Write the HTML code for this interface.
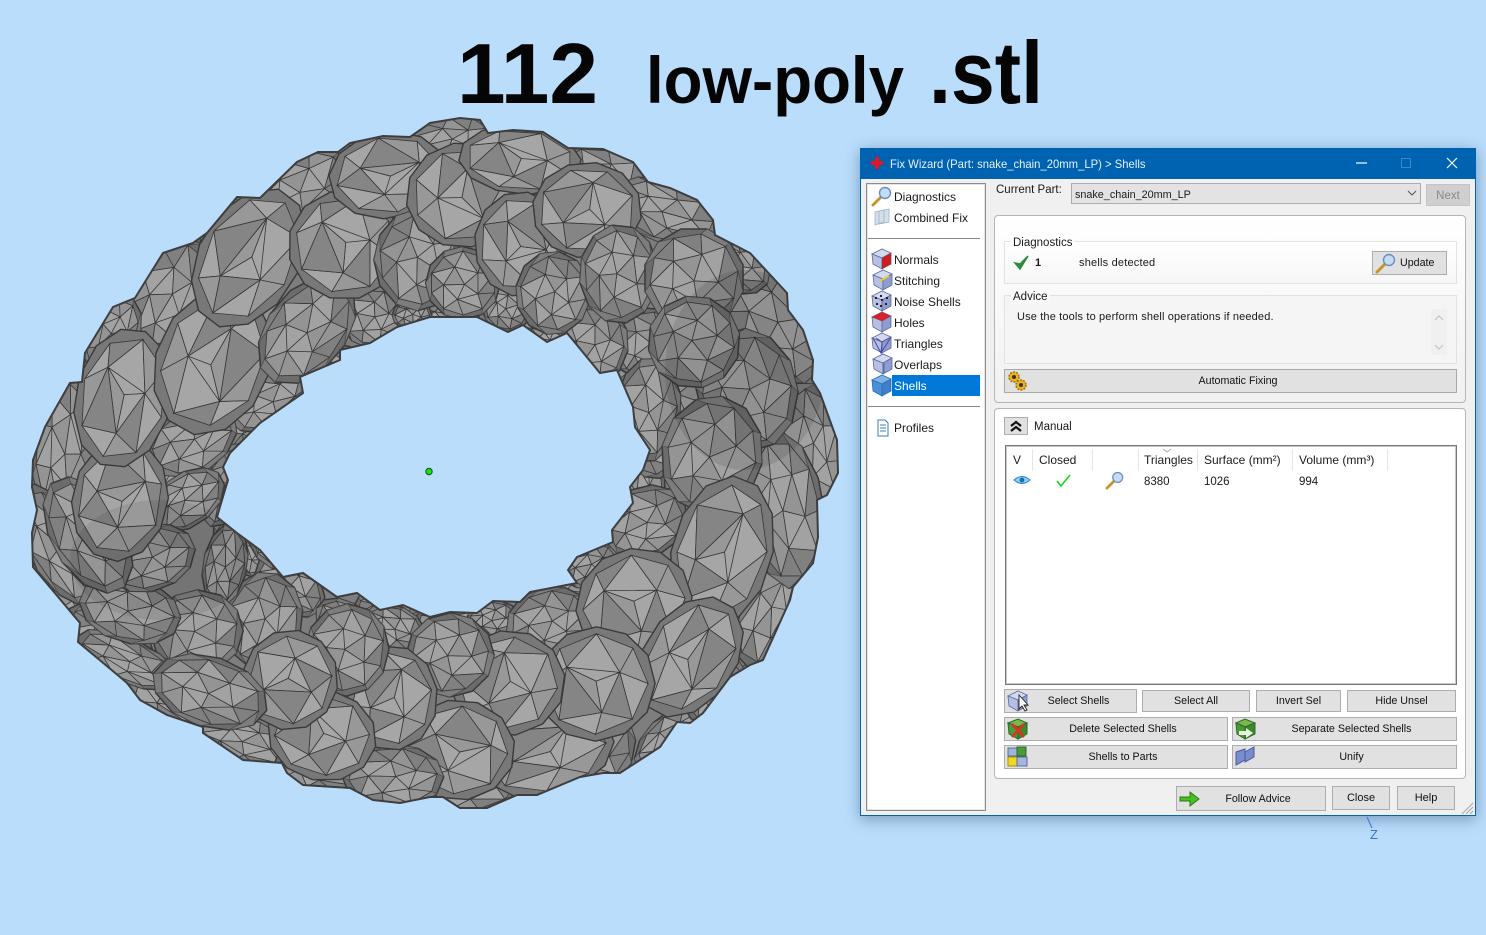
<!DOCTYPE html>
<html><head><meta charset="utf-8"><title>112 low-poly .stl</title>
<style>
html,body{margin:0;padding:0;background:#b9ddfb;width:1486px;height:935px;overflow:hidden}
body{position:relative;font-family:"Liberation Sans",sans-serif;color:#111}
svg{position:absolute;left:0;top:0}
.m path,.m polygon{vector-effect:non-scaling-stroke}
.a{position:absolute;box-sizing:border-box}
.t{position:absolute;white-space:nowrap;font-size:11.5px;line-height:14px;color:#1a1a1a}
.n{font-size:12px}
.b{position:absolute;box-sizing:border-box;background:#e1e1e1;border:1px solid #adadad;font-size:10.7px;color:#111;text-align:center;white-space:nowrap}
</style></head><body>
<svg width="1486" height="935" viewBox="0 0 1486 935">
<defs>
<g id="s" class="m" transform="scale(1.1)">
<polygon points="100,0 87,50 50,87 0,100 -50,87 -87,50 -100,0 -87,-50 -50,-87 0,-100 50,-87 87,-50" fill="#6c6c6c" stroke="#3a3a3a" stroke-width="1.5"/>
<path fill="#7d7d7d" stroke="#4a4a4a" stroke-width=".7" d="M88 0L100 0L87 50L71 52ZM27 84L50 87L0 100L-27 84ZM-71 52L-87 50L-100 0L-88 0ZM-71-52L-50-87L0-100L-27-84ZM27-84L50-87L87-50L71-52Z"/>
<path fill="#a2a2a2" stroke="#383838" stroke-width=".8" d="M4-4L45 15L5 52ZM4-4L-44 22L-28-40ZM4-4L30-40L45 15ZM45 15L71 52L5 52ZM-44 22L-27 84L5 52ZM-44 22L-88 0L-28-40ZM30-40L71-52L45 15Z"/>
<path fill="#949494" stroke="#383838" stroke-width=".8" d="M4-4L5 52L-44 22ZM4-4L-28-40L30-40ZM5 52L71 52L27 84ZM-44 22L-71 52L-88 0ZM-28-40L-27-84L30-40ZM45 15L71-52L88 0ZM45 15L88 0L71 52Z"/>
<path fill="#808080" stroke="#383838" stroke-width=".8" d="M5 52L27 84L-27 84ZM-44 22L-27 84L-71 52ZM-28-40L-88 0L-71-52ZM-28-40L-71-52L-27-84ZM30-40L-27-84L27-84ZM30-40L27-84L71-52Z"/>
</g>
<g id="t" class="m" transform="scale(1.14)">
<polygon points="100,0 87,50 50,87 0,100 -50,87 -87,50 -100,0 -87,-50 -50,-87 0,-100 50,-87 87,-50" fill="#787878" stroke="#3a3a3a" stroke-width="1.4"/>
<path fill="#a6a6a6" stroke="#363636" stroke-width=".8" d="M0-5L40-20L10 50ZM0-5L-50-30L40-20ZM40-20L88 0L62 62ZM10 50L0 88L-62 62ZM-50-30L-88 0L-62-62ZM-50-30L0-88L40-20Z"/>
<path fill="#989898" stroke="#363636" stroke-width=".8" d="M0-5L10 50L-50-30ZM40-20L62-62L88 0ZM10 50L62 62L0 88ZM-50-30L-62 62L-88 0ZM40-20L0-88L62-62Z"/>
<path fill="#858585" stroke="#363636" stroke-width=".8" d="M40-20L62 62L10 50ZM10 50L-62 62L-50-30ZM-50-30L-62-62L0-88Z"/>
</g>
<clipPath id="c"><path clip-rule="evenodd" d="M45 427L70 383L82 382L85 353L113 307L135 298L163 253L193 243L207 233L237 197L260 198L297 162L318 152L338 152L350 143L383 136L410 137L430 123L460 118L480 120L488 133L513 130L543 132L568 148L603 149L633 162L648 182L670 188L697 200L713 220L715 235L750 253L787 293L788 310L803 330L813 360L812 380L820 393L837 440L838 473L827 495L817 500L818 537L813 563L793 587L790 600L763 660L750 665L730 677L703 713L690 723L677 722L660 747L620 773L603 773L580 777L537 795L517 795L487 808L460 808L443 797L430 797L400 803L373 800L350 788L303 785L287 773L282 763L243 760L203 733L203 727L167 715L140 700L127 683L120 677L78 642L80 623L33 567L32 533L37 510L32 487L33 460ZM430 317L477 317L508 332L523 325L547 342L567 333L600 373L617 370L633 407L635 427L650 450L643 470L630 487L633 503L612 530L613 542L577 557L568 570L577 583L530 592L520 602L493 601L477 613L450 612L430 617L403 605L380 610L357 593L337 597L303 573L283 577L260 550L237 533L217 517L222 500L228 480L223 467L230 453L260 423L303 393L300 377L340 360L340 350L370 343L397 327Z"/></clipPath>
</defs>
<path fill="#7e7e7e" clip-path="url(#c)" d="M0 100H860V830H0Z"/>
<g clip-path="url(#c)">
<use href="#s" transform="translate(245 545) rotate(45) scale(.34 .24) rotate(10)"/>
<use href="#s" transform="translate(290 585) rotate(40) scale(.36 .24) rotate(120)"/>
<use href="#s" transform="translate(390 612) rotate(5) scale(.34 .22) rotate(60)"/>
<use href="#s" transform="translate(450 625) rotate(0) scale(.34 .2) rotate(210)"/>
<use href="#s" transform="translate(565 590) rotate(-20) scale(.34 .24) rotate(90)"/>
<use href="#s" transform="translate(610 540) rotate(-35) scale(.34 .24) rotate(20)"/>
<use href="#s" transform="translate(638 470) rotate(80) scale(.46 .24) rotate(300)"/>
<use href="#s" transform="translate(650 440) rotate(75) scale(.36 .26) rotate(150)"/>
<use href="#s" transform="translate(628 385) rotate(70) scale(.4 .26) rotate(40)"/>
<use href="#s" transform="translate(600 352) rotate(50) scale(.36 .24) rotate(200)"/>
<use href="#s" transform="translate(440 320) rotate(0) scale(.36 .16) rotate(20)"/>
<use href="#s" transform="translate(330 372) rotate(-20) scale(.36 .22) rotate(100)"/>
<use href="#s" transform="translate(262 425) rotate(-35) scale(.4 .24) rotate(250)"/>
<use href="#s" transform="translate(226 485) rotate(-70) scale(.4 .2) rotate(30)"/>
<use href="#s" transform="translate(700 620) rotate(35) scale(.6 .4) rotate(70)"/>
<use href="#s" transform="translate(670 740) rotate(-45) scale(.4 .22) rotate(180)"/>
<use href="#s" transform="translate(700 400) rotate(0) scale(.4 .4) rotate(110)"/>
<use href="#s" transform="translate(650 345) rotate(20) scale(.36 .34) rotate(330)"/>
<use href="#s" transform="translate(640 180) rotate(20) scale(.4 .22) rotate(60)"/>
<use href="#s" transform="translate(250 330) rotate(30) scale(.42 .42) rotate(30)"/>
<use href="#s" transform="translate(165 350) rotate(0) scale(.4 .4) rotate(160)"/>
<use href="#s" transform="translate(170 470) rotate(0) scale(.38 .3) rotate(90)"/>
<use href="#s" transform="translate(70 600) rotate(40) scale(.42 .22) rotate(10)"/>
<use href="#s" transform="translate(280 540) rotate(40) scale(.32 .26) rotate(70)"/>
<use href="#s" transform="translate(450 140) rotate(-8) scale(.42 .24) rotate(20)"/>
<use href="#s" transform="translate(535 160) rotate(8) scale(.52 .32) rotate(70)"/>
<use href="#s" transform="translate(605 178) rotate(18) scale(.48 .28) rotate(120)"/>
<use href="#s" transform="translate(665 212) rotate(20) scale(.52 .28) rotate(200)"/>
<use href="#s" transform="translate(360 170) rotate(-10) scale(.42 .32) rotate(40)"/>
<use href="#s" transform="translate(300 190) rotate(-30) scale(.5 .36) rotate(160)"/>
<use href="#s" transform="translate(232 225) rotate(-40) scale(.38 .26) rotate(90)"/>
<use href="#s" transform="translate(170 295) rotate(25) scale(.36 .55) rotate(10)"/>
<use href="#s" transform="translate(112 335) rotate(25) scale(.24 .38) rotate(250)"/>
<use href="#s" transform="translate(65 450) rotate(3) scale(.3 .68) rotate(130)"/>
<use href="#s" transform="translate(58 545) rotate(-30) scale(.28 .62) rotate(80)"/>
<use href="#s" transform="translate(110 645) rotate(-50) scale(.3 .5) rotate(60)"/>
<use href="#s" transform="translate(165 690) rotate(-65) scale(.28 .5) rotate(30)"/>
<use href="#s" transform="translate(245 742) rotate(15) scale(.48 .24) rotate(210)"/>
<use href="#s" transform="translate(320 768) rotate(10) scale(.42 .22) rotate(140)"/>
<use href="#s" transform="translate(470 785) rotate(-8) scale(.5 .26) rotate(300)"/>
<use href="#s" transform="translate(590 745) rotate(-25) scale(.42 .4) rotate(110)"/>
<use href="#s" transform="translate(715 690) rotate(-50) scale(.34 .24) rotate(60)"/>
<use href="#s" transform="translate(770 610) rotate(20) scale(.3 .56) rotate(330)"/>
<use href="#s" transform="translate(812 445) rotate(-8) scale(.3 .58) rotate(20)"/>
<use href="#s" transform="translate(785 510) rotate(-8) scale(.36 .72) rotate(220)"/>
<use href="#s" transform="translate(775 322) rotate(-32) scale(.42 .62) rotate(70)"/>
<use href="#s" transform="translate(735 265) rotate(30) scale(.34 .24) rotate(180)"/>
<use href="#s" transform="translate(648 410) rotate(5) scale(.3 .48) rotate(100)"/>
<use href="#s" transform="translate(593 345) rotate(10) scale(.32 .38) rotate(30)"/>
<use href="#s" transform="translate(543 332) rotate(30) scale(.22 .14) rotate(10)"/>
<use href="#s" transform="translate(507 308) rotate(0) scale(.22 .22) rotate(190)"/>
<use href="#s" transform="translate(373 317) rotate(0) scale(.3 .28) rotate(40)"/>
<use href="#s" transform="translate(412 315) rotate(0) scale(.18 .14) rotate(0)"/>
<use href="#s" transform="translate(273 400) rotate(-25) scale(.44 .26) rotate(150)"/>
<use href="#s" transform="translate(192 440) rotate(-30) scale(.44 .3) rotate(60)"/>
<use href="#s" transform="translate(187 500) rotate(-35) scale(.38 .24) rotate(260)"/>
<use href="#s" transform="translate(590 565) rotate(-20) scale(.28 .2) rotate(40)"/>
<use href="#s" transform="translate(645 522) rotate(-25) scale(.4 .32) rotate(90)"/>
<use href="#s" transform="translate(493 620) rotate(-5) scale(.24 .18) rotate(200)"/>
<use href="#s" transform="translate(550 622) rotate(-12) scale(.4 .32) rotate(30)"/>
<use href="#s" transform="translate(395 628) rotate(25) scale(.3 .2) rotate(120)"/>
<use href="#s" transform="translate(347 625) rotate(35) scale(.32 .2) rotate(80)"/>
<use href="#s" transform="translate(263 620) rotate(10) scale(.36 .44) rotate(10)"/>
<use href="#s" transform="translate(225 565) rotate(10) scale(.2 .38) rotate(100)"/>
<use href="#s" transform="translate(197 632) rotate(-10) scale(.42 .38) rotate(250)"/>
<use href="#s" transform="translate(127 660) rotate(25) scale(.5 .2) rotate(60)"/>
<use href="#s" transform="translate(130 610) rotate(15) scale(.47 .3) rotate(170)"/>
<use href="#s" transform="translate(150 558) rotate(-18) scale(.42 .3) rotate(40)"/>
<use href="#s" transform="translate(88 535) rotate(-30) scale(.33 .58) rotate(290)"/>
<use href="#t" transform="translate(120 500) rotate(10) scale(.42 .54) rotate(110)"/>
<use href="#t" transform="translate(123 398) rotate(12) scale(.42 .62) rotate(10)"/>
<use href="#t" transform="translate(213 362) rotate(22) scale(.5 .66) rotate(200)"/>
<use href="#s" transform="translate(307 330) rotate(38) scale(.36 .56) rotate(80)"/>
<use href="#t" transform="translate(249 258) rotate(30) scale(.44 .66) rotate(50)"/>
<use href="#t" transform="translate(345 245) rotate(-5) scale(.5 .48) rotate(20)"/>
<use href="#t" transform="translate(388 175) rotate(-8) scale(.52 .38) rotate(130)"/>
<use href="#s" transform="translate(418 260) rotate(0) scale(.4 .46) rotate(300)"/>
<use href="#t" transform="translate(463 195) rotate(-10) scale(.5 .46) rotate(210)"/>
<use href="#s" transform="translate(463 283) rotate(0) scale(.34 .33) rotate(90)"/>
<use href="#t" transform="translate(520 160) rotate(5) scale(.54 .3) rotate(20)"/>
<use href="#t" transform="translate(520 244) rotate(0) scale(.4 .46) rotate(160)"/>
<use href="#t" transform="translate(587 210) rotate(0) scale(.48 .42) rotate(70)"/>
<use href="#s" transform="translate(553 293) rotate(0) scale(.34 .38) rotate(10)"/>
<use href="#s" transform="translate(619 274) rotate(0) scale(.36 .45) rotate(230)"/>
<use href="#s" transform="translate(694 278) rotate(15) scale(.46 .46) rotate(120)"/>
<use href="#s" transform="translate(747 390) rotate(-10) scale(.46 .56) rotate(40)"/>
<use href="#s" transform="translate(694 342) rotate(0) scale(.42 .42) rotate(260)"/>
<use href="#s" transform="translate(712 455) rotate(10) scale(.46 .54) rotate(180)"/>
<use href="#t" transform="translate(722 552) rotate(15) scale(.44 .68) rotate(80)"/>
<use href="#t" transform="translate(634 604) rotate(-30) scale(.52 .48) rotate(25)"/>
<use href="#t" transform="translate(690 657) rotate(35) scale(.4 .58) rotate(190)"/>
<use href="#t" transform="translate(547 752) rotate(-15) scale(.6 .38) rotate(100)"/>
<use href="#t" transform="translate(596 684) rotate(-15) scale(.52 .5) rotate(15)"/>
<use href="#t" transform="translate(508 683) rotate(-8) scale(.5 .46) rotate(60)"/>
<use href="#s" transform="translate(450 655) rotate(0) scale(.4 .38) rotate(210)"/>
<use href="#t" transform="translate(458 750) rotate(0) scale(.5 .44) rotate(140)"/>
<use href="#s" transform="translate(393 777) rotate(0) scale(.46 .3) rotate(30)"/>
<use href="#t" transform="translate(392 698) rotate(0) scale(.4 .46) rotate(80)"/>
<use href="#s" transform="translate(347 650) rotate(10) scale(.38 .42) rotate(230)"/>
<use href="#t" transform="translate(322 735) rotate(12) scale(.48 .4) rotate(30)"/>
<use href="#t" transform="translate(290 680) rotate(10) scale(.42 .44) rotate(300)"/>
<use href="#s" transform="translate(210 692) rotate(18) scale(.54 .32) rotate(150)"/>
<ellipse cx="745" cy="370" rx="80" ry="100" fill="#000" opacity=".1"/>
<ellipse cx="160" cy="560" rx="90" ry="60" fill="#000" opacity=".08"/>
</g>
<path fill="none" stroke="#3e3e3e" stroke-width="2" d="M45 427L70 383L82 382L85 353L113 307L135 298L163 253L193 243L207 233L237 197L260 198L297 162L318 152L338 152L350 143L383 136L410 137L430 123L460 118L480 120L488 133L513 130L543 132L568 148L603 149L633 162L648 182L670 188L697 200L713 220L715 235L750 253L787 293L788 310L803 330L813 360L812 380L820 393L837 440L838 473L827 495L817 500L818 537L813 563L793 587L790 600L763 660L750 665L730 677L703 713L690 723L677 722L660 747L620 773L603 773L580 777L537 795L517 795L487 808L460 808L443 797L430 797L400 803L373 800L350 788L303 785L287 773L282 763L243 760L203 733L203 727L167 715L140 700L127 683L120 677L78 642L80 623L33 567L32 533L37 510L32 487L33 460ZM430 317L477 317L508 332L523 325L547 342L567 333L600 373L617 370L633 407L635 427L650 450L643 470L630 487L633 503L612 530L613 542L577 557L568 570L577 583L530 592L520 602L493 601L477 613L450 612L430 617L403 605L380 610L357 593L337 597L303 573L283 577L260 550L237 533L217 517L222 500L228 480L223 467L230 453L260 423L303 393L300 377L340 360L340 350L370 343L397 327Z"/>
<circle cx="429" cy="471.500" r="3.200" fill="#16e016" stroke="#0a5a0a" stroke-width="1"/>
<g font-family="'Liberation Sans',sans-serif" font-weight="700" fill="#050505">
<text x="457" y="103" font-size="85" textLength="141" lengthAdjust="spacingAndGlyphs">112</text>
<text x="646" y="103" font-size="66" textLength="258" lengthAdjust="spacingAndGlyphs">low-poly</text>
<text x="929" y="103" font-size="88" textLength="114" lengthAdjust="spacingAndGlyphs">.stl</text>
</g>
</svg>

<div class="a" style="left:860px;top:148px;width:616px;height:668px;background:#f0f0f0;border:1px solid #0a63ad;box-shadow:0 3px 14px rgba(40,70,110,.45)"></div>
<div class="a" style="left:860px;top:148px;width:616px;height:31px;background:#0063b1"></div>
<div class="t" style="left:890px;top:157px;color:#e8f1fa;font-size:12px;transform-origin:0 50%;transform:scaleX(.94)">Fix Wizard (Part: snake_chain_20mm_LP) &gt; Shells</div>

<div class="a" style="left:866px;top:183px;width:120px;height:628px;background:#fff;border:1px solid #8c8c8c;box-shadow:inset 0 0 0 1px #e4e4e4"></div>
<div class="a" style="left:868px;top:238px;width:112px;height:1px;background:#888"></div>
<div class="a" style="left:868px;top:406px;width:112px;height:1px;background:#888"></div>
<div class="a" style="left:892px;top:375px;width:88px;height:21px;background:#0078d7"></div>
<div class="t n" style="left:894px;top:190px">Diagnostics</div>
<div class="t n" style="left:894px;top:211px">Combined Fix</div>
<div class="t n" style="left:894px;top:253px">Normals</div>
<div class="t n" style="left:894px;top:274px">Stitching</div>
<div class="t n" style="left:894px;top:295px">Noise Shells</div>
<div class="t n" style="left:894px;top:316px">Holes</div>
<div class="t n" style="left:894px;top:337px">Triangles</div>
<div class="t n" style="left:894px;top:358px">Overlaps</div>
<div class="t n" style="left:894px;top:379px;color:#fff">Shells</div>
<div class="t n" style="left:894px;top:421px">Profiles</div>

<div class="t" style="left:996px;top:183px">Current Part:</div>
<div class="a" style="left:1071px;top:183px;width:350px;height:21px;background:#e3e3e3;border:1px solid #adadad"></div>
<div class="t" style="left:1075px;top:188px;font-size:10.8px">snake_chain_20mm_LP</div>
<div class="b" style="left:1426px;top:184px;width:44px;height:22px;background:#cfcfcf;border-color:#c4c4c4;color:#8a8a8a;line-height:22px;font-size:11.5px">Next</div>

<div class="a" style="left:994px;top:215px;width:472px;height:188px;background:linear-gradient(#fff,#f1f1f1);border:1px solid #b5b5b5;border-radius:4px"></div>
<div class="a" style="left:1004px;top:241px;width:453px;height:43px;border:1px solid #e2e2e2;background:linear-gradient(#fff,#f7f7f7)"></div>
<div class="t" style="left:1011px;top:236px;background:#fff;padding:0 2px">Diagnostics</div>
<div class="t" style="left:1035px;top:256px;font-weight:700;font-size:11px">1</div>
<div class="t" style="left:1079px;top:256px;font-size:11px;letter-spacing:.2px">shells detected</div>
<div class="b" style="left:1372px;top:251px;width:75px;height:24px;line-height:23px;text-align:left;padding-left:27px">Update</div>
<div class="a" style="left:1004px;top:295px;width:453px;height:69px;border:1px solid #e2e2e2;background:#f5f5f5"></div>
<div class="t" style="left:1011px;top:290px;background:#f8f8f8;padding:0 2px">Advice</div>
<div class="t" style="left:1017px;top:310px;font-size:11px;letter-spacing:.15px">Use the tools to perform shell operations if needed.</div>
<div class="a" style="left:1431px;top:309px;width:16px;height:46px;background:#f0f0f0"></div>
<div class="b" style="left:1004px;top:369px;width:453px;height:24px;line-height:23px;padding-left:15px;background:#e1e1e1;border-color:#a8a8a8">Automatic Fixing</div>

<div class="a" style="left:994px;top:408px;width:472px;height:371px;background:#fff;border:1px solid #b5b5b5;border-radius:4px"></div>
<div class="b" style="left:1004px;top:417px;width:24px;height:18px"></div>
<div class="t" style="left:1034px;top:420px">Manual</div>
<div class="a" style="left:1005px;top:445px;width:452px;height:240px;background:#fff;border:1px solid #777;box-shadow:inset 0 0 0 1px #c8c8c8"></div>
<div class="t" style="left:1013px;top:453px;font-size:12px">V</div>
<div class="t" style="left:1039px;top:453px;font-size:12px">Closed</div>
<div class="t" style="left:1144px;top:453px;font-size:12px">Triangles</div>
<div class="t" style="left:1204px;top:453px;font-size:12px">Surface (mm²)</div>
<div class="t" style="left:1299px;top:453px;font-size:12px">Volume (mm³)</div>
<div class="a" style="left:1032px;top:449px;width:1px;height:22px;background:#e5e5e5"></div>
<div class="a" style="left:1092px;top:449px;width:1px;height:22px;background:#e5e5e5"></div>
<div class="a" style="left:1138px;top:449px;width:1px;height:22px;background:#e5e5e5"></div>
<div class="a" style="left:1197px;top:449px;width:1px;height:22px;background:#e5e5e5"></div>
<div class="a" style="left:1292px;top:449px;width:1px;height:22px;background:#e5e5e5"></div>
<div class="a" style="left:1387px;top:449px;width:1px;height:22px;background:#e5e5e5"></div>
<div class="t" style="left:1144px;top:475px">8380</div>
<div class="t" style="left:1204px;top:475px">1026</div>
<div class="t" style="left:1299px;top:475px">994</div>

<div class="b" style="left:1004px;top:689px;width:133px;height:24px;line-height:23px;padding-left:16px">Select Shells</div>
<div class="b" style="left:1142px;top:690px;width:108px;height:22px;line-height:21px">Select All</div>
<div class="b" style="left:1256px;top:690px;width:85px;height:22px;line-height:21px">Invert Sel</div>
<div class="b" style="left:1347px;top:690px;width:109px;height:22px;line-height:21px">Hide Unsel</div>
<div class="b" style="left:1004px;top:717px;width:224px;height:24px;line-height:23px;padding-left:14px">Delete Selected Shells</div>
<div class="b" style="left:1232px;top:717px;width:225px;height:24px;line-height:23px;padding-left:14px">Separate Selected Shells</div>
<div class="b" style="left:1004px;top:745px;width:224px;height:24px;line-height:23px;padding-left:14px">Shells to Parts</div>
<div class="b" style="left:1232px;top:745px;width:225px;height:24px;line-height:23px;padding-left:14px">Unify</div>
<div class="b" style="left:1176px;top:786px;width:150px;height:25px;line-height:24px;padding-left:14px">Follow Advice</div>
<div class="b" style="left:1332px;top:786px;width:58px;height:24px;line-height:22px;font-size:11px">Close</div>
<div class="b" style="left:1397px;top:786px;width:58px;height:24px;line-height:22px;font-size:11px">Help</div>
<div class="t" style="left:1370px;top:828px;color:#3a6ee0;font-size:13px">Z</div>

<svg width="1486" height="935" viewBox="0 0 1486 935">
<defs>
<g id="cu"><path d="M0 5L10 0L19 4L10 9Z" fill="#d3daf0" stroke="#5b6a9c" stroke-width=".8"/><path d="M0 5L10 9L10 20L1 15Z" fill="#b6c0e4" stroke="#5b6a9c" stroke-width=".8"/><path d="M10 9L19 4L19 15L10 20Z" fill="#8f9cd2" stroke="#5b6a9c" stroke-width=".8"/></g>
<g id="mg"><path d="M1 18L9 10" stroke="#c8922a" stroke-width="3" stroke-linecap="round"/><circle cx="13" cy="6" r="5.500" fill="#c4ddf5" stroke="#6b8dbd" stroke-width="1.400"/></g>
</defs>
<path d="M877 160h4v-4h4v4h4v4h-4v4h-4v-4h-4z" transform="translate(-6 1)" fill="#e8161c"/>
<path d="M1356 163h11" stroke="#fff" stroke-width="1.200"/>
<rect x="1401.500" y="158.500" width="9" height="9" fill="none" stroke="#3f86c4"/>
<path d="M1447 158l10 10M1457 158l-10 10" stroke="#fff" stroke-width="1.200"/>
<use href="#mg" transform="translate(872 187)"/>
<path d="M875 212l9-2v12l-9 3zM879 211l10-2v13l-10 2z" fill="#d4dfec" stroke="#a0b2c6" stroke-width=".8"/>
<use href="#cu" transform="translate(872 249)"/><path d="M882 258L891 253V264L882 269Z" fill="#c8201e"/>
<use href="#cu" transform="translate(873 270)"/><path d="M880 281l9-5" stroke="#f2cf1e" stroke-width="1.600"/>
<use href="#cu" transform="translate(872 291)"/><path d="M875 298h2M880 296h2M886 298h2M876 304h2M885 304h2M880 306h2M881 300h2" stroke="#222" stroke-width="2"/>
<use href="#cu" transform="translate(872 312)"/><path d="M872 317L882 312L891 316L882 321Z" fill="#d81f2a"/>
<use href="#cu" transform="translate(872 333)"/><path d="M873 338L881 353L882 342M891 337L881 353M882 342L876 338M882 342L889 338" fill="none" stroke="#4a4a9c"/>
<use href="#cu" transform="translate(873 354)"/><path d="M884 374v-11" stroke="#5b6a9c"/>
<path d="M872 380L882 375L891 379L882 384Z" fill="#7cb4ea" stroke="#2f6fb0" stroke-width=".8"/><path d="M872 380L882 384L882 396L873 391Z" fill="#4a90d9" stroke="#2f6fb0" stroke-width=".8"/><path d="M882 384L891 379L891 391L882 396Z" fill="#3d7fc8" stroke="#2f6fb0" stroke-width=".8"/>
<path d="M878 420h7l3 3v13h-10z" fill="#fff" stroke="#3a7bb8"/><path d="M880 425h6M880 428h6M880 431h6" stroke="#3a7bb8"/>
<path d="M1408 191l4 4 4-4" fill="none" stroke="#555"/>
<path d="M1015 263l5 6 8-13-8 8z" fill="#2e8b3c" stroke="#2e8b3c" stroke-width="1.500"/>
<use href="#mg" transform="translate(1376 254)"/>
<path d="M1435 320l4-4 4 4M1435 345l4 4 4-4" fill="none" stroke="#c4c4c4" stroke-width="1.200"/>
<g fill="#f0b418" stroke="#9a7210" stroke-width="1.500" stroke-dasharray="2 1.200"><circle cx="1014" cy="377" r="5"/><circle cx="1021" cy="385" r="5"/></g><circle cx="1014" cy="377" r="2" fill="#334"/><circle cx="1021" cy="385" r="2" fill="#334"/>
<path d="M1011 426l5-4 5 4M1011 431l5-4 5 4" fill="none" stroke="#111" stroke-width="2.200"/>
<path d="M1163 449l4 3 4-3" fill="none" stroke="#aaa"/>
<path d="M1014 480q8-7 16 0q-8 7-16 0z" fill="#8fd0f4" stroke="#2a86c8"/><circle cx="1022" cy="480" r="2.400" fill="#1d6fb0"/>
<path d="M1057 481l4 5 9-11" fill="none" stroke="#16d616" stroke-width="1.600"/>
<use href="#mg" transform="translate(1106 472) scale(.9)"/>
<use href="#cu" transform="translate(1008 691)"/><path d="M1019 695v14l3-3 3 5 2-1-3-5h4z" fill="#fff" stroke="#222" stroke-width=".9"/>
<path d="M1008 723L1018 719L1027 723L1018 727Z" fill="#7ab84a" stroke="#2a6a2a"/><path d="M1008 723L1018 727V739L1009 734Z" fill="#4a9a3a" stroke="#2a6a2a"/><path d="M1018 727L1027 723V734L1018 739Z" fill="#3a8a2a" stroke="#2a6a2a"/><path d="M1012 724l12 13M1024 724l-12 13" stroke="#e03020" stroke-width="2.600"/>
<path d="M1236 723L1245 719L1255 723L1245 727Z" fill="#7ab84a" stroke="#2a6a2a"/><path d="M1236 723L1245 727V739L1237 734Z" fill="#4a9a3a" stroke="#2a6a2a"/><path d="M1245 727L1255 723V734L1245 739Z" fill="#3a8a2a" stroke="#2a6a2a"/><path d="M1239 731h7v-3l7 5-7 5v-3h-7z" fill="#e8f4e0"/>
<rect x="1008" y="748" width="9" height="8" fill="#9fb4dc" stroke="#5b6a9c"/><rect x="1017" y="747" width="9" height="9" fill="#4a9a3a" stroke="#2a6a2a"/><rect x="1008" y="757" width="9" height="9" fill="#f0d820" stroke="#a09010"/><rect x="1017" y="757" width="10" height="9" fill="#a6b4e0" stroke="#5b6a9c"/>
<path d="M1236 752L1245 749L1245 760L1236 765ZM1245 752L1254 747V757L1245 762Z" fill="#7a8ccc" stroke="#4a5a9c"/>
<path d="M1180 797h10v-5l9 7-9 7v-5h-10z" fill="#48c020" stroke="#2a7a18"/>
<path d="M1473 803l-11 11M1473 807l-7 7M1473 811l-3 3" stroke="#a8a8a8"/>
<path d="M1367 817l5 11" stroke="#3a6ee0"/>
</svg>
</body></html>
